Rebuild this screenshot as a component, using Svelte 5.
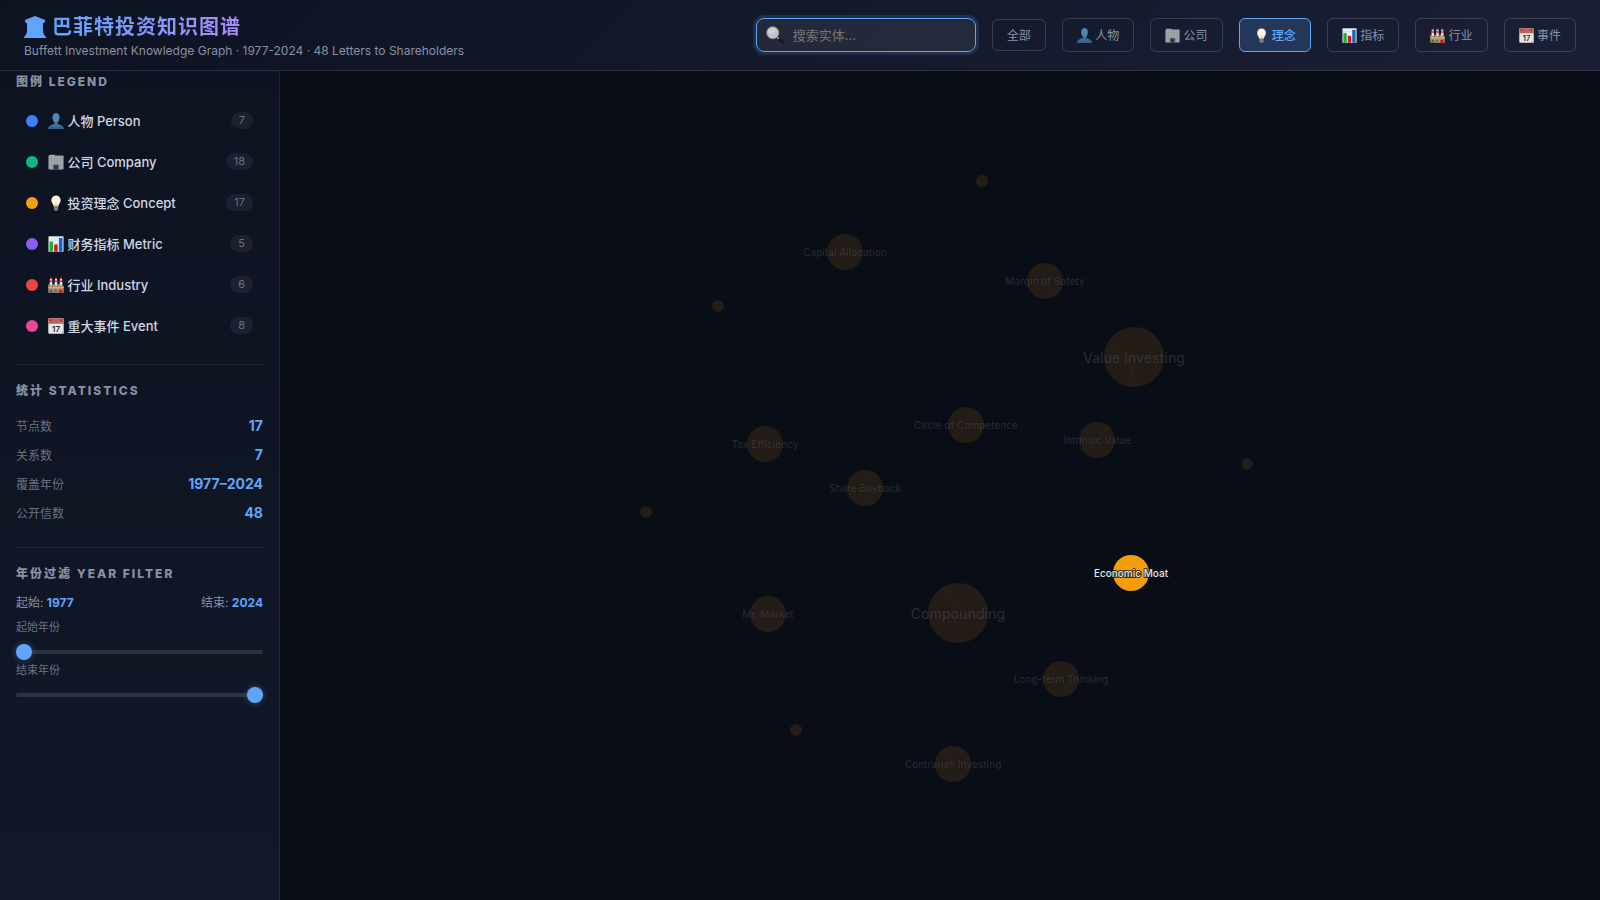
<script lang="ts">
    interface GraphNode
    {
        name: string;
        x: number;
        y: number;
        r: number;
        active?: boolean;
    }

    const filters = [
        { icon: '', label: '全部' },
        { icon: 'person', label: '人物' },
        { icon: 'company', label: '公司' },
        { icon: 'concept', label: '理念' },
        { icon: 'metric', label: '指标' },
        { icon: 'industry', label: '行业' },
        { icon: 'event', label: '事件' }
    ];

    const legend = [
        { icon: 'person', label: '人物 Person', color: '#3b82f6', count: 7 },
        { icon: 'company', label: '公司 Company', color: '#10b981', count: 18 },
        { icon: 'concept', label: '投资理念 Concept', color: '#f59e0b', count: 17 },
        { icon: 'metric', label: '财务指标 Metric', color: '#8b5cf6', count: 5 },
        { icon: 'industry', label: '行业 Industry', color: '#ef4444', count: 6 },
        { icon: 'event', label: '重大事件 Event', color: '#ec4899', count: 8 }
    ];

    const stats = [
        { label: '节点数', value: '17' },
        { label: '关系数', value: '7' },
        { label: '覆盖年份', value: '1977–2024' },
        { label: '公开信数', value: '48' }
    ];

    const nodes: GraphNode[] = [
        { name: 'Capital Allocation', x: 565, y: 181, r: 18 },
        { name: 'Margin of Safety', x: 765, y: 210, r: 18 },
        { name: 'Value Investing', x: 854, y: 286, r: 30 },
        { name: 'Circle of Competence', x: 686, y: 354, r: 18 },
        { name: 'Intrinsic Value', x: 817, y: 369, r: 18 },
        { name: 'Tax Efficiency', x: 485, y: 373, r: 18 },
        { name: 'Share Buyback', x: 585, y: 417, r: 18 },
        { name: 'Economic Moat', x: 851, y: 502, r: 18, active: true },
        { name: 'Compounding', x: 678, y: 542, r: 30 },
        { name: 'Mr. Market', x: 488, y: 543, r: 18 },
        { name: 'Long-term Thinking', x: 781, y: 608, r: 18 },
        { name: 'Contrarian Investing', x: 673, y: 693, r: 18 },
        { name: '', x: 702, y: 110, r: 6 },
        { name: '', x: 438, y: 235, r: 6 },
        { name: '', x: 366, y: 441, r: 6 },
        { name: '', x: 967, y: 393, r: 6 },
        { name: '', x: 516, y: 659, r: 6 }
    ];

    // from and to are indexes into nodes
    const links = [
        { from: 0, to: 6, width: 2 },
        { from: 2, to: 1, width: 3 },
        { from: 2, to: 4, width: 4 },
        { from: 3, to: 7, width: 2 },
        { from: 5, to: 8, width: 2 },
        { from: 8, to: 10, width: 3 },
        { from: 9, to: 11, width: 2 }
    ];
    const curveness = 0.2;

    let activeFilter = $state('理念');
    let query = $state('');
    let startYear = $state(1977);
    let endYear = $state(2024);

    function linkPath(from: number, to: number)
    {
        const a = nodes[from];
        const b = nodes[to];
        const cx = (a.x + b.x) / 2 - (a.y - b.y) * curveness;
        const cy = (a.y + b.y) / 2 - (b.x - a.x) * curveness;
        return `M${a.x} ${a.y} Q${cx} ${cy} ${b.x} ${b.y}`;
    }
</script>

{#snippet icon(name: string)}
    <svg class="icon" viewBox="0 0 16 16" aria-hidden="true">
        {#if name === 'person'}
            <path d="M8 0.300C10.300 0.300 11.500 2 11.400 4.500C11.300 6.700 10.600 8.200 9.700 9.200V10.700C10.500 11.600 15.500 11.700 15.800 15.700H0.200C0.500 11.700 5.500 11.600 6.300 10.700V9.200C5.400 8.200 4.700 6.700 4.600 4.500C4.500 2 5.700 0.300 8 0.300Z" fill="#41719a" />
            <path d="M8 0.300C10.300 0.300 11.500 2 11.400 4.500C11.300 6.700 10.600 8.200 9.700 9.200H6.300C5.400 8.200 4.700 6.700 4.600 4.500C4.500 2 5.700 0.300 8 0.300Z" fill="#5485ad" />
            <path d="M0.200 15.700Q0.500 13.600 2.300 12.800L8 14L13.700 12.800Q15.500 13.600 15.800 15.700Z" fill="#33658f" />
        {:else if name === 'company'}
            <rect x="0.500" y="1.500" width="15" height="14" fill="#94a1a5" />
            <path d="M1.500 0.800H7V2H1.500Z" fill="#c6a99b" />
            <path d="M0.500 3.500H15.500M0.500 6H15.500M0.500 8.500H15.500M0.500 11H15.500M0.500 13.500H15.500" stroke="#adb8ba" stroke-width="0.600" />
            <path d="M3.500 2V15.500M6.500 2V11M9.500 2V11M12.500 2V15.500" stroke="#82929a" stroke-width="0.400" />
            <path d="M5 10.500H11V15.500H5Z" fill="#5c6b74" />
            <path d="M6.200 11.500H9.800V15.500H6.200Z" fill="#26343f" />
        {:else if name === 'concept'}
            <path d="M8 0.500C11 0.500 12.700 2.700 12.700 5.200C12.700 8 10.600 9.200 10.300 11.500H5.700C5.400 9.200 3.300 8 3.300 5.200C3.300 2.700 5 0.500 8 0.500Z" fill="#f4e7bd" />
            <ellipse cx="8" cy="5" rx="3.500" ry="4" fill="#fffbe8" />
            <path d="M7.500 11V7.500H8.500V11" fill="none" stroke="#e6cf98" stroke-width="0.500" />
            <path d="M5.800 11.500H10.200V14L9 15.700H7L5.800 14Z" fill="#93918a" />
            <path d="M5.800 12.700H10.200M6 14H10" stroke="#55554f" stroke-width="0.500" />
        {:else if name === 'metric'}
            <rect x="0.500" y="0.300" width="15" height="15.500" fill="#e6eff5" />
            <path d="M0.500 4H15.500M0.500 8H15.500M0.500 12H15.500" stroke="#b9cbd9" stroke-width="0.500" />
            <path d="M1.500 5.500H5V15.700H1.500Z" fill="#16b525" />
            <path d="M6.200 8.500H9.700V15.700H6.200Z" fill="#d3122c" />
            <path d="M10.900 2H14.500V15.700H10.900Z" fill="#1e62bd" />
        {:else if name === 'industry'}
            <path d="M2 1H4L4.500 9H1.500ZM7 1H9L9.500 9H6.500ZM12 1H14L14.500 9H11.500Z" fill="#e9e2dc" />
            <path d="M2 0.500H4V2H2ZM7 0.500H9V2H7ZM12 0.500H14V2H12ZM1.700 3.500H4.300V5H1.700ZM6.700 3.500H9.300V5H6.700ZM11.700 3.500H14.300V5H11.700Z" fill="#cf2832" />
            <path d="M0.300 7L5 9.500V7L10 9.500V7L15.700 9V15.700H0.300Z" fill="#b99569" />
            <path d="M0.300 10H15.700V11H0.300Z" fill="#d0b184" />
            <path d="M1.500 12.500H4.500V15.700H1.500ZM6 12.500H9V14.500H6Z" fill="#3f6d80" />
            <path d="M10.800 12.500H14.500V15.700H10.800Z" fill="#c51f25" />
        {:else if name === 'event'}
            <rect x="0.300" y="0.300" width="15.400" height="15.400" rx="1" fill="#e8e6e4" />
            <path d="M0.300 5.700V1.300Q0.300 0.300 1.300 0.300H14.700Q15.700 0.300 15.700 1.300V5.700Z" fill="#b9635f" />
            <path d="M3 1V3M13 1V3" stroke="#713836" stroke-width="1.200" />
            <path d="M12.500 15.700L15.700 12.500V15.700Z" fill="#b8b4b0" />
            <text class="day" x="8" y="14">17</text>
        {:else if name === 'search'}
            <path d="M10.300 10.300L14.700 14.500" stroke="#171717" stroke-width="2.400" stroke-linecap="round" />
            <path d="M9.500 9.500L11.500 11.500" stroke="#9c9c9c" stroke-width="1.500" />
            <circle cx="6" cy="6" r="5.400" fill="#c3c5c8" stroke="#8e9093" stroke-width="0.700" />
            <ellipse cx="5" cy="4.500" rx="3" ry="2.500" fill="#d0d2d4" />
        {/if}
    </svg>
{/snippet}

<div class="app">
    <header class="header">
        <div class="brand">
            <h1 class="title">
                <svg class="logo" viewBox="0 0 22 22" aria-hidden="true">
                    <path d="M11 0L20 3.500L21 4V6L19 7.500V16Q19.500 18.500 22 21V22H0V21Q2.500 18.500 3 16V7.500L1 6V4L2 3.500Z" fill="#60a5fa" />
                </svg>
                <span class="title-text">巴菲特投资知识图谱</span>
            </h1>
            <p class="subtitle">Buffett Investment Knowledge Graph · 1977-2024 · 48 Letters to Shareholders</p>
        </div>

        <div class="controls">
            <label class="search">
                <span class="search-icon">{@render icon('search')}</span>
                <input type="text" placeholder="搜索实体..." aria-label="搜索实体" bind:value={query} />
            </label>
            {#each filters as f}
                <button
                    type="button"
                    class="filter"
                    class:has-icon={f.icon}
                    class:is-active={activeFilter === f.label}
                    onclick={() => (activeFilter = f.label)}
                >
                    {#if f.icon}{@render icon(f.icon)}{/if}
                    {f.label}
                </button>
            {/each}
        </div>
    </header>

    <div class="body">
        <aside class="sidebar">
            <section class="panel">
                <h2 class="panel-title">图例 LEGEND</h2>
                <ul class="legend">
                    {#each legend as item}
                        <li class="legend-item">
                            <span class="dot" style="background: {item.color}"></span>
                            <span class="legend-label">{@render icon(item.icon)} {item.label}</span>
                            <span class="count">{item.count}</span>
                        </li>
                    {/each}
                </ul>
            </section>

            <section class="panel">
                <h2 class="panel-title">统计 STATISTICS</h2>
                <dl class="stats">
                    {#each stats as s}
                        <div class="stat">
                            <dt>{s.label}</dt>
                            <dd>{s.value}</dd>
                        </div>
                    {/each}
                </dl>
            </section>

            <section class="panel">
                <h2 class="panel-title">年份过滤 YEAR FILTER</h2>
                <div class="years">
                    <span>起始: <b>{startYear}</b></span>
                    <span>结束: <b>{endYear}</b></span>
                </div>
                <label class="range-label" for="start-year">起始年份</label>
                <input id="start-year" class="range" type="range" min="1977" max="2024" bind:value={startYear} />
                <label class="range-label" for="end-year">结束年份</label>
                <input id="end-year" class="range" type="range" min="1977" max="2024" bind:value={endYear} />
            </section>
        </aside>

        <main class="graph">
            <svg class="canvas" viewBox="0 0 1320 829" role="img" aria-label="投资理念">
                {#each nodes as n}
                    <circle class="node" class:is-active={n.active} cx={n.x} cy={n.y} r={n.r} />
                {/each}
                {#each links as link}
                    <path class="link" d={linkPath(link.from, link.to)} stroke-width={link.width} />
                {/each}
                {#each nodes as n}
                    {#if n.name}
                        <text class="node-label" class:is-active={n.active} class:big={n.r > 20} x={n.x} y={n.y}>{n.name}</text>
                    {/if}
                {/each}
            </svg>
        </main>
    </div>
</div>

<style>
    :global(body)
    {
        background: #090e16;
    }

    .app
    {
        min-height: 100vh;
        display: flex;
        flex-direction: column;
        background: #090e16;
        color: #e2e8f0;
        font-family: Inter, "Noto Sans CJK SC", sans-serif;
    }

    .app *
    {
        box-sizing: border-box;
    }

    .header
    {
        display: flex;
        align-items: center;
        justify-content: space-between;
        gap: 16px;
        min-height: 71px;
        padding: 0 24px;
        border-bottom: 1px solid rgba(255, 255, 255, 0.1);
        background: linear-gradient(135deg, #0d1321 0%, #1a1f35 100%);
    }

    .brand
    {
        padding-top: 5px;
    }

    .title
    {
        display: flex;
        align-items: center;
        gap: 6px;
        margin: 0;
        font-size: 20px;
        line-height: 24px;
        font-weight: 700;
        letter-spacing: 1px;
    }

    .logo
    {
        width: 22px;
        height: 22px;
    }

    .title-text
    {
        background: linear-gradient(90deg, #60a5fa, #a78bfa);
        background-clip: text;
        color: transparent;
        white-space: nowrap;
    }

    .subtitle
    {
        margin: 3px 0 0;
        color: #8892a4;
        font-size: 12px;
        line-height: 18px;
        white-space: nowrap;
    }

    .controls
    {
        display: flex;
        align-items: center;
        gap: 16px;
    }

    .icon
    {
        width: 16px;
        height: 16px;
        vertical-align: -3px;
    }

    .day
    {
        fill: #2b2b2b;
        font-size: 8px;
        font-weight: 600;
        text-anchor: middle;
    }

    .search
    {
        position: relative;
        display: block;
    }

    .search-icon
    {
        position: absolute;
        left: 10px;
        top: 8px;
        line-height: 0;
    }

    .search-icon .icon
    {
        width: 18px;
        height: 18px;
    }

    .search input
    {
        display: block;
        width: 220px;
        height: 34px;
        padding: 0 12px 0 36px;
        border: 1px solid #60a5fa;
        border-radius: 8px;
        outline: none;
        background: rgba(255, 255, 255, 0.07);
        box-shadow: 0 0 0 3px rgba(96, 165, 250, 0.15);
        color: #e2e8f0;
        font-family: inherit;
        font-size: 13px;
    }

    .search input::placeholder
    {
        color: #757575;
    }

    .filter
    {
        padding: 7px 14px 5px;
        border: 1px solid rgba(255, 255, 255, 0.15);
        border-radius: 6px;
        background: transparent;
        color: #8892a4;
        font-family: inherit;
        font-size: 12px;
        line-height: 18px;
        white-space: nowrap;
        cursor: pointer;
    }

    .filter.has-icon
    {
        line-height: 20px;
    }

    .filter .icon
    {
        width: 15px;
        height: 15px;
    }

    .filter.is-active
    {
        border-color: #60a5fa;
        background: rgba(96, 165, 250, 0.2);
        color: #60a5fa;
        font-weight: 500;
    }

    .body
    {
        flex: 1;
        display: flex;
    }

    .sidebar
    {
        width: 280px;
        flex-shrink: 0;
        padding: 1px 16px 0;
        border-right: 1px solid rgba(255, 255, 255, 0.08);
        background: linear-gradient(180deg, #0d1321, #111827);
    }

    .panel + .panel
    {
        margin-top: 20px;
        padding-top: 16px;
        border-top: 1px solid rgba(255, 255, 255, 0.08);
    }

    .panel-title
    {
        margin: 0;
        color: #8892a4;
        font-size: 12px;
        line-height: 20px;
        font-weight: 800;
        letter-spacing: 2px;
    }

    .legend
    {
        display: flex;
        flex-direction: column;
        gap: 4px;
        margin: 10px 0 0;
        padding: 0;
        list-style: none;
    }

    .legend-item
    {
        display: flex;
        align-items: center;
        gap: 10px;
        height: 37px;
        padding: 0 10px;
        font-size: 13px;
    }

    .dot
    {
        width: 12px;
        height: 12px;
        border-radius: 50%;
    }

    .legend-label
    {
        flex: 1;
        color: #d0d7e2;
        font-weight: 500;
        white-space: nowrap;
    }

    .count
    {
        padding: 0 8px;
        border-radius: 9px;
        background: rgba(255, 255, 255, 0.06);
        color: #6b7280;
        font-size: 11px;
        line-height: 17px;
    }

    .stats
    {
        margin: 10px 0 0;
    }

    .stat
    {
        display: flex;
        align-items: center;
        justify-content: space-between;
        height: 29px;
    }

    .stat dt
    {
        color: #6b7280;
        font-size: 12px;
    }

    .stat dd
    {
        margin: 0;
        color: #60a5fa;
        font-size: 14px;
        font-weight: 700;
    }

    .years
    {
        display: flex;
        justify-content: space-between;
        margin: 9px 0 5px;
        color: #8892a4;
        font-size: 12px;
        line-height: 20px;
    }

    .years b
    {
        color: #60a5fa;
    }

    .range-label
    {
        display: block;
        color: #6b7280;
        font-size: 11px;
        line-height: 18px;
    }

    .range
    {
        display: block;
        width: 100%;
        height: 4px;
        margin: 14px 0 7px;
        border-radius: 2px;
        outline: none;
        background: rgba(255, 255, 255, 0.12);
        appearance: none;
    }

    .range::-webkit-slider-thumb
    {
        width: 16px;
        height: 16px;
        border-radius: 50%;
        background: #60a5fa;
        box-shadow: 0 0 6px rgba(96, 165, 250, 0.4);
        appearance: none;
        cursor: pointer;
    }

    .graph
    {
        flex: 1;
        display: flex;
        min-width: 0;
    }

    .canvas
    {
        display: block;
        width: 100%;
    }

    .link
    {
        fill: none;
        stroke: rgba(255, 255, 255, 0.01);
    }

    .node
    {
        fill: #241c16;
    }

    .node.is-active
    {
        fill: #f59e0b;
    }

    .node-label
    {
        fill: #e2e8f0;
        fill-opacity: 0.13;
        stroke: #0a0e17;
        stroke-opacity: 0.12;
        stroke-width: 2;
        paint-order: stroke;
        font-size: 10px;
        font-weight: 500;
        text-anchor: middle;
        dominant-baseline: central;
    }

    .node-label.is-active
    {
        fill-opacity: 1;
        stroke-opacity: 0.8;
    }

    .node-label.big
    {
        font-size: 14px;
    }
</style>
